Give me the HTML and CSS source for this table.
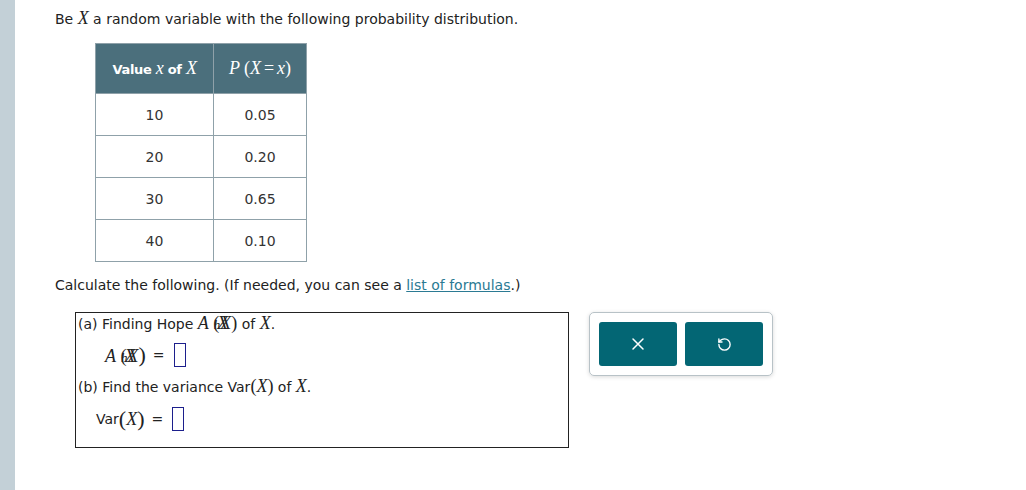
FILE: index.html
```html
<!DOCTYPE html>
<html>
<head>
<meta charset="utf-8">
<link rel="stylesheet" href="styles.css">
</head>
<body>
<div class="page">
  <aside class="rail"></aside>
  <main class="content">
    <p class="intro">Be <i class="m">X</i> a random variable with the following probability distribution.</p>
    <table class="dist">
      <thead>
        <tr><th class="c1">Value <i class="m">x</i> of <i class="m">X</i></th><th class="c2"><i class="m">P</i><span class="mr sp">(</span><i class="m">X</i><span class="mr op">=</span><i class="m">x</i><span class="mr">)</span></th></tr>
      </thead>
      <tbody>
        <tr><td>10</td><td>0.05</td></tr>
        <tr><td>20</td><td>0.20</td></tr>
        <tr><td>30</td><td>0.65</td></tr>
        <tr><td>40</td><td>0.10</td></tr>
      </tbody>
    </table>
    <p class="calc">Calculate the following. (If needed, you can see a <a href="#" class="link">list of formulas</a>.)</p>
    <div class="work">
      <div class="answers">
        <div class="q">(a) Finding Hope <span class="garble"><i class="m">A</i><i class="m g1">h</i><span class="mr g2">(</span><i class="m g3">X</i><i class="m g4">X</i><span class="mr">)</span></span> of <i class="m">X</i>.</div>
        <div class="ans a1"><span class="garble"><i class="m">A</i><i class="m g1">h</i><span class="mr g2">(</span><i class="m g3">X</i><i class="m g4">X</i><span class="mr big">)</span></span><span class="eq">=</span><span class="box"></span></div>
        <div class="q">(b) Find the variance Var<span class="mr">(</span><i class="m">X</i><span class="mr">)</span> of <i class="m">X</i>.</div>
        <div class="ans a2">Var<span class="mr big">(</span><i class="m">X</i><span class="mr big">)</span><span class="eq">=</span><span class="box"></span></div>
      </div>
      <div class="tools">
        <button class="btn" aria-label="clear"><svg width="14" height="14" viewBox="0 0 14 14"><path d="M2 2 L12 12 M12 2 L2 12" stroke="#fff" stroke-width="1.5" fill="none" stroke-linecap="round"/></svg></button>
        <button class="btn" aria-label="undo"><svg width="15" height="15" viewBox="0 0 24 24"><path d="M3 12a9 9 0 1 0 9-9 9.75 9.75 0 0 0-6.74 2.74L3 8" stroke="#fff" stroke-width="2.2" fill="none" stroke-linecap="round" stroke-linejoin="round"/><path d="M3 3v5h5" stroke="#fff" stroke-width="2.2" fill="none" stroke-linecap="round" stroke-linejoin="round"/></svg></button>
      </div>
    </div>
  </main>
</div>
</body>
</html>
```

FILE: styles.css
```css
* { box-sizing: border-box; }
html, body { margin: 0; padding: 0; background: #fff; }
body {
  font-family: "DejaVu Sans", Verdana, sans-serif;
  font-size: 14px;
  color: #222;
}
.page { display: flex; min-height: 490px; }
.rail { width: 15px; background: #c3d0d7; flex: none; }
.content { padding: 9px 0 0 40px; flex: 1; }
.m { font-family: "Liberation Serif", "DejaVu Serif", serif; font-style: italic; font-size: 18px; }
.mr { font-family: "Liberation Serif", "DejaVu Serif", serif; font-size: 18px; }
.intro { margin: 0; line-height: 18px; }
.dist {
  margin: 15px 0 0 40px;
  border-collapse: collapse;
  table-layout: fixed;
}
.dist th {
  background: #4b6f7c;
  color: #fff;
  height: 50px;
  border: 1px solid #8fa1a9;
  font-weight: bold;
  font-size: 13px;
  padding: 0;
  white-space: nowrap;
}
.dist th .m, .dist th .mr { font-weight: normal; }
.dist th .sp { margin-left: 4px; }
.dist th .op { margin: 0 3px; }
.dist th.c1 { width: 118px; letter-spacing: -0.3px; }
.dist th.c2 { width: 93px; }
.dist td {
  height: 42px;
  border: 1px solid #8fa1a9;
  text-align: center;
  padding: 0;
  color: #333;
}
.calc { margin: 14px 0 0; line-height: 18px; }
.link { color: #2b7a93; text-decoration: underline; }
.work { display: flex; align-items: flex-start; margin-top: 18px; margin-left: 20px; gap: 20px; }
.answers {
  width: 494px;
  height: 136px;
  border: 1px solid #222;
  padding: 0 0 0 2px;
}
.q { line-height: 20px; height: 20px; display: flex; align-items: baseline; white-space: pre; }
.ans { display: flex; align-items: center; }
.a1 { padding-left: 27px; height: 43px; }
.a2 { padding-left: 18px; height: 46px; }
.eq { margin: 0 9px 0 7px; font-size: 14px; }
.box { display: inline-block; width: 12px; height: 24px; border: 1.5px solid #1c1f8c; }
.big { font-size: 22px; }
.garble { display: inline-flex; align-items: baseline; }
.g1 { font-size: 13px; margin-left: 5px; margin-right: -7px; }
.g2 { margin-right: -2px; }
.g3 { margin-right: -8px; }
.tools {
  width: 184px;
  height: 64px;
  border: 1px solid #b8c2c7;
  border-radius: 5px;
  box-shadow: 0 1px 4px rgba(0,0,0,0.15);
  display: flex;
  gap: 8px;
  padding: 9px 9px;
}
.btn {
  width: 78px;
  height: 44px;
  background: #036674;
  border: none;
  border-radius: 3px;
  display: flex;
  align-items: center;
  justify-content: center;
  padding: 0;
}
```
